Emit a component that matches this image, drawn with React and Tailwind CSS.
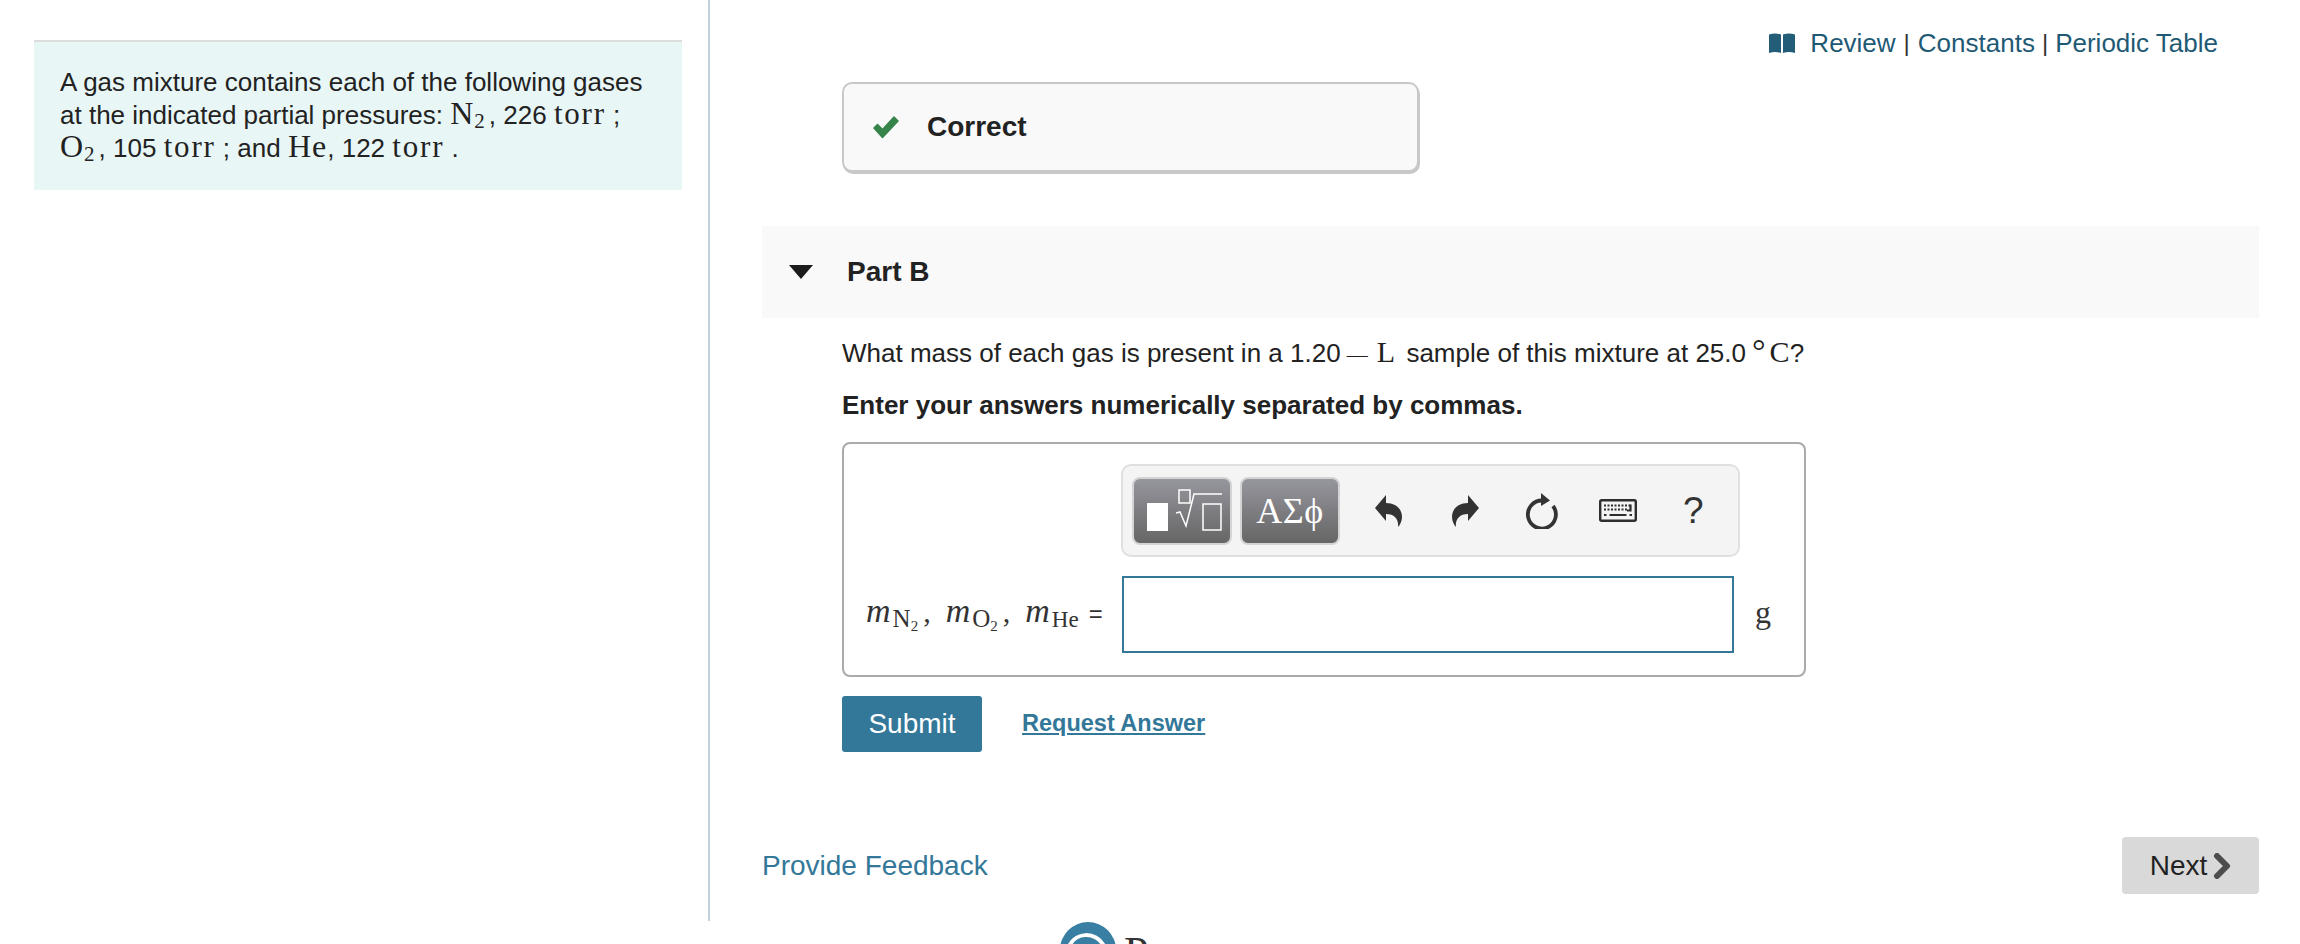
import React from "react";

const serif = "font-['Liberation_Serif',serif]";

function Sub({ children }) {
  return <span className="inline-block text-[21px] leading-none translate-y-[4px] mr-[3px]">{children}</span>;
}

function Torr() {
  return <span className={`${serif} text-[31px] tracking-[1.8px]`}>torr</span>;
}

function MLabel({ sub, subsub, comma, subSize }) {
  return (
    <span className={`${serif} inline-flex items-baseline`}>
      <span className="italic text-[34px] tracking-[2px] leading-none">m</span>
      <span className={`${subSize} leading-none translate-y-[5px] inline-block`}>{sub}</span>
      {subsub && <span className="text-[15px] leading-none translate-y-[9px] inline-block">{subsub}</span>}
      {comma && <span className="text-[30px] leading-none ml-[5px]">,</span>}
    </span>
  );
}

function BookIcon() {
  return (
    <svg width="26" height="21" viewBox="0 0 26 21" className="shrink-0">
      <path d="M0 1.5C4 0 8 0 12 1.5V20C8 18.6 4 18.6 0 20Z" fill="#235d78" />
      <path d="M26 1.5C22 0 18 0 14 1.5V20C18 18.6 22 18.6 26 20Z" fill="#235d78" />
    </svg>
  );
}

function Toolbar() {
  return (
    <div className="w-[619px] h-[93px] ml-[277px] rounded-[10px] border-2 border-[#e0e0e0] bg-[#f4f4f4] flex items-center pl-[9px]">
      <div className="w-[100px] h-[68px] shrink-0 rounded-[8px] border-2 border-[#d4d4d4] bg-gradient-to-b from-[#96969e] to-[#666666]">
        <svg width="96" height="64" viewBox="0 0 96 64" className="block">
          <rect x="13" y="24" width="21" height="28" fill="#fff" />
          <rect x="45" y="11" width="11" height="13" fill="none" stroke="#fff" strokeWidth="1.5" />
          <path d="M42 34L46 33L52 47L60 15H88" fill="none" stroke="#fff" strokeWidth="1.5" />
          <rect x="69" y="25" width="18" height="26" fill="none" stroke="#fff" strokeWidth="1.5" />
        </svg>
      </div>
      <div className={`${serif} ml-[8px] w-[100px] h-[68px] shrink-0 rounded-[8px] border-2 border-[#d4d4d4] bg-gradient-to-b from-[#96969e] to-[#666666] flex items-center justify-center text-white text-[36px] tracking-[0.5px]`}>
        ΑΣϕ
      </div>
      <svg width="27" height="32" viewBox="0 0 27 32" className="ml-[35px] shrink-0">
        <path d="M0 13L11 0V8C22 8 27 15 27 22C27 26 25 30 23 32C24 25 20 19 11 19V26Z" fill="#333" />
      </svg>
      <svg width="27" height="32" viewBox="0 0 27 32" className="ml-[50px] shrink-0">
        <path d="M27 13L16 0V8C5 8 0 15 0 22C0 26 2 30 4 32C3 25 7 19 16 19V26Z" fill="#333" />
      </svg>
      <svg width="32" height="36" viewBox="0 0 32 36" className="ml-[47px] shrink-0">
        <path d="M16 7.5A14 14 0 1 0 27 13" fill="none" stroke="#333" strokeWidth="3.8" />
        <path d="M15 0L24 7.5L15 13Z" fill="#333" />
      </svg>
      <svg width="38" height="23" viewBox="0 0 38 23" className="ml-[41px] shrink-0">
        <rect x="1.2" y="1.2" width="35.6" height="20.6" rx="1.5" fill="none" stroke="#2e2e2e" strokeWidth="2.4" />
        <path d="M5 6.5H33M5 10.5H29" stroke="#2e2e2e" strokeWidth="2.2" strokeDasharray="2 1.5" fill="none" />
        <path d="M31.5 5.5V11.5H28M5 16H7.5M10.5 16H27.5M30.5 16H33" stroke="#2e2e2e" strokeWidth="2.2" fill="none" />
      </svg>
      <span className="ml-[46px] text-[37px] text-[#333] leading-none">?</span>
    </div>
  );
}

export default function App() {
  return (
    <div className="w-[2300px] h-[944px] overflow-hidden bg-white text-[#222] text-[26px] font-['Liberation_Sans',Arial,sans-serif] flex flex-col">
      <div className="flex h-[921px] shrink-0">
        <aside className="w-[710px] shrink-0 border-r-2 border-[#c3cfdd] pt-[40px] pl-[34px] pr-[26px]">
          <div className="h-[150px] border-t-2 border-[#dddddd] bg-[#e8f6f6] px-[26px] pt-[25px] leading-[31px]">
            A gas mixture contains each of the following gases at the indicated partial pressures:{" "}
            <span className={`${serif} text-[32px] tracking-[1px]`}>N<Sub>2</Sub></span>, 226 <Torr /> ;
            <br />
            <span className={`${serif} text-[32px] tracking-[1px]`}>O<Sub>2</Sub></span>, 105 <Torr /> ; and{" "}
            <span className={`${serif} text-[32px] tracking-[1px]`}>He</span>, 122 <Torr /> .
          </div>
        </aside>

        <main className="flex-1 pl-[52px] pr-[41px]">
          <div className="h-[82px] pt-[26px] pr-[41px] flex items-start justify-end">
            <div className="flex items-center h-[34px] text-[#1f5a75]">
              <BookIcon />
              <span className="ml-[15px]">Review</span>
              <span className="mx-[8px] text-[24px] text-[#333]">|</span>
              <span>Constants</span>
              <span className="mx-[7px] text-[24px] text-[#333]">|</span>
              <span>Periodic Table</span>
            </div>
          </div>

          <div className="ml-[80px] w-[577px] h-[90px] rounded-[10px] border-2 border-[#c8c8c8] shadow-[1px_2px_0_#c8c8c8] bg-[#f9f9f9] flex items-center pl-[28px]">
            <svg width="28" height="24" viewBox="0 0 28 24">
              <path d="M2 13L5.5 9.5L10.5 14.5L22 2L26 6L10.5 22.5Z" fill="#36844a" stroke="#36844a" strokeWidth="1.5" strokeLinejoin="round" />
            </svg>
            <span className="ml-[27px] font-bold text-[28px] text-[#222]">Correct</span>
          </div>

          <div className="mt-[54px] h-[92px] bg-[#f9f9f9] flex items-center pl-[27px]">
            <svg width="24" height="14" viewBox="0 0 24 14">
              <path d="M0 0H24L12 14Z" fill="#1c1c1c" />
            </svg>
            <span className="ml-[34px] font-bold text-[28px]">Part B</span>
          </div>

          <div className="pl-[80px]">
            <p className="mt-[17px] h-[34px] leading-[34px] whitespace-nowrap">
              What mass of each gas is present in a 1.20{" "}
              <span className={`${serif} text-[21px] ml-[-1px]`}>—</span>
              <span className={`${serif} text-[30px] ml-[9px]`}>L</span>
              <span className="ml-[4px]"> sample of this mixture at 25.0</span>
              <span className={`${serif} inline-block text-[34px] leading-[0] ml-[6px]`}>°</span>
              <span className={`${serif} text-[30px] ml-[4px]`}>C</span>?
            </p>
            <p className="mt-[19px] leading-[34px] font-bold">Enter your answers numerically separated by commas.</p>

            <div className="mt-[20px] w-[964px] h-[235px] rounded-[8px] border-2 border-[#aaaaaa] pt-[20px]">
              <Toolbar />
              <div className="mt-[19px] flex items-center h-[77px]">
                <div className="w-[278px] pl-[22px] pb-[8px] shrink-0 flex items-baseline whitespace-nowrap text-[#333]">
                  <MLabel sub="N" subsub="2" comma subSize="text-[25px]" />
                  <span className="w-[15px]" />
                  <MLabel sub="O" subsub="2" comma subSize="text-[25px]" />
                  <span className="w-[15px]" />
                  <MLabel sub="He" subSize="text-[23px]" />
                  <span className="text-[24px] ml-[10px] leading-none">=</span>
                </div>
                <div className="w-[612px] h-[77px] shrink-0 border-2 border-[#337899] bg-white" />
                <span className={`${serif} ml-[21px] pb-[6px] text-[32px] leading-none text-[#333]`}>g</span>
              </div>
            </div>

            <div className="mt-[19px] flex items-center">
              <button className="w-[140px] h-[56px] rounded-[3px] bg-[#337899] text-white text-[28px]">Submit</button>
              <a className="ml-[40px] text-[#337899] font-bold text-[23.5px] underline">Request Answer</a>
            </div>
          </div>

          <div className="mt-[85px] flex items-center justify-between">
            <a className="text-[#337899] text-[28px]">Provide Feedback</a>
            <div className="w-[137px] h-[57px] rounded-[4px] bg-[#d9d9d9] flex items-center justify-center text-[28px]">
              Next
              <svg width="18" height="26" viewBox="0 0 18 26" className="ml-[6px]">
                <path d="M4 3L14 13L4 23" fill="none" stroke="#4d4d4d" strokeWidth="6" strokeLinecap="round" strokeLinejoin="round" />
              </svg>
            </div>
          </div>
        </main>
      </div>

      <div className="h-[23px] shrink-0 overflow-hidden pl-[1060px] pt-[1px] flex">
        <svg width="56" height="56" viewBox="0 0 56 56" className="shrink-0">
          <circle cx="28" cy="28" r="28" fill="#387fa3" />
          <path d="M8 27C14 9 36 9 44 24" fill="none" stroke="#fff" strokeWidth="4" />
        </svg>
        <span className={`${serif} ml-[8px] text-[44px] leading-none text-[#333] pt-[9px]`}>Pearson</span>
      </div>
    </div>
  );
}
